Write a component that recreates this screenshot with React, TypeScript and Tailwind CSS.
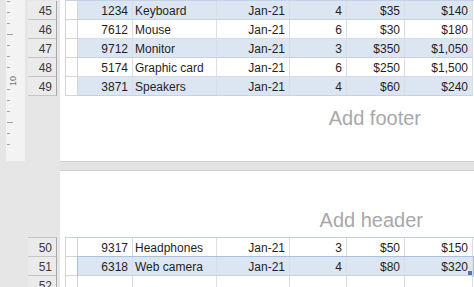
import React from 'react'

type Item = { n: number; id: string; name: string; date: string; qty: string; price: string; total: string; blue: boolean }

const topRows: Item[] = [
  { n: 45, id: '1234', name: 'Keyboard', date: 'Jan-21', qty: '4', price: '$35', total: '$140', blue: true },
  { n: 46, id: '7612', name: 'Mouse', date: 'Jan-21', qty: '6', price: '$30', total: '$180', blue: false },
  { n: 47, id: '9712', name: 'Monitor', date: 'Jan-21', qty: '3', price: '$350', total: '$1,050', blue: true },
  { n: 48, id: '5174', name: 'Graphic card', date: 'Jan-21', qty: '6', price: '$250', total: '$1,500', blue: false },
  { n: 49, id: '3871', name: 'Speakers', date: 'Jan-21', qty: '4', price: '$60', total: '$240', blue: true },
]

const bottomRows: Item[] = [
  { n: 50, id: '9317', name: 'Headphones', date: 'Jan-21', qty: '3', price: '$50', total: '$150', blue: false },
  { n: 51, id: '6318', name: 'Web camera', date: 'Jan-21', qty: '4', price: '$80', total: '$320', blue: true },
]

const font = { fontFamily: '"Liberation Sans", Arial, sans-serif' }

// row number cell in the gray margin
const RowHead = ({ n }: { n: number }) => (
  <div className="h-[19px] border-b border-[#c4c4c4] border-r border-r-[#a8a8a8] bg-[#ebebeb] flex items-end justify-end pr-[4px] pb-[1px] text-[12px] leading-[14px] text-[#3a3a3a]">
    {n}
  </div>
)

const Cell = ({ w, right, children }: { w: string; right?: boolean; children?: React.ReactNode }) => (
  <div className={`${w} shrink-0 h-full border-r border-[#d9dee6] flex items-end pb-[1px] leading-[14px] ${right ? 'justify-end pr-[4px]' : 'pl-[2px]'}`}>
    {children}
  </div>
)

const Row = ({ r, selected }: { r?: Item; selected?: boolean }) => (
  <div className="flex h-[19px] text-[12px] text-[#1f1f1f]">
    <div className="w-[13px] shrink-0 border-x border-b border-[#d4d4d4] bg-white" />
    <div
      className={`relative flex h-full border-b ${r?.blue ? 'bg-[#dce6f2] border-[#c3d2e6]' : 'bg-white border-[#d6dde8]'} ${selected ? 'outline outline-1 outline-[#a9c1df]' : ''}`}
    >
      <Cell w="w-[55px]" right>{r?.id}</Cell>
      <Cell w="w-[84px]">{r?.name}</Cell>
      <Cell w="w-[73px]" right>{r?.date}</Cell>
      <Cell w="w-[57px]" right>{r?.qty}</Cell>
      <Cell w="w-[58px]" right>{r?.price}</Cell>
      <Cell w="w-[68px]" right>{r?.total}</Cell>
      {selected && <div className="absolute right-[1px] bottom-[0px] w-[4px] h-[4px] bg-[#4a78b8]" />}
    </div>
  </div>
)

const Ruler = () => {
  const ticks = Array.from({ length: 14 }, (_, i) => 1 + i * 11)
  return (
    <div className="relative ml-[6px] w-[19px] h-full bg-[#f3f3f3]">
      <svg width="19" height="161" className="absolute left-0 top-0">
        {ticks.map((y) =>
          y === 78 ? null : (
            <line key={y} x1="1" x2={y === 34 || y === 122 ? 7 : 4} y1={y + 0.5} y2={y + 0.5} stroke="#a3a3a3" strokeWidth="1" />
          ),
        )}
      </svg>
      <div className="absolute left-[2px] top-[76px] text-[9px] leading-[10px] text-[#707070] [writing-mode:vertical-rl] rotate-180">10</div>
    </div>
  )
}

export default function App() {
  return (
    <div className="w-[474px] h-[287px] overflow-hidden bg-[#e6e6e6]" style={font}>
      {/* first page, bottom part */}
      <div className="flex h-[161px]">
        <div className="w-[60px] shrink-0 flex">
          <Ruler />
          <div className="ml-[3px] w-[29px] pt-[1px]">
            {topRows.map((r) => (
              <RowHead key={r.n} n={r.n} />
            ))}
          </div>
        </div>
        <div className="flex-1 bg-white pl-[5px]">
          <div className="h-[1px] bg-[#c3d2e6]" />
          {topRows.map((r) => (
            <Row key={r.n} r={r} />
          ))}
          <div className="flex justify-end pr-[53px] pt-[10px] text-[20px] leading-[24px] text-[#a8a8a8]">Add footer</div>
        </div>
      </div>

      {/* page gap */}
      <div className="flex h-[10px]">
        <div className="w-[60px] shrink-0" />
        <div className="flex-1 border-y border-[#cfcfcf] bg-[#e3e3e3]" />
      </div>

      {/* second page, top part */}
      <div className="flex h-[116px]">
        <div className="w-[60px] shrink-0 flex">
          <div className="ml-[28px] w-[29px] pt-[66px]">
            <div className="h-[1px] bg-[#c4c4c4]" />
            {bottomRows.map((r) => (
              <RowHead key={r.n} n={r.n} />
            ))}
            <RowHead n={52} />
          </div>
        </div>
        <div className="flex-1 bg-white pl-[5px]">
          <div className="flex justify-end pr-[51px] pt-[37px] h-[66px] text-[20px] leading-[24px] text-[#a8a8a8]">Add header</div>
          <div className="h-[1px] bg-[#c3d2e6]" />
          <Row r={bottomRows[0]} />
          <Row r={bottomRows[1]} selected />
          <Row />
        </div>
      </div>
    </div>
  )
}
